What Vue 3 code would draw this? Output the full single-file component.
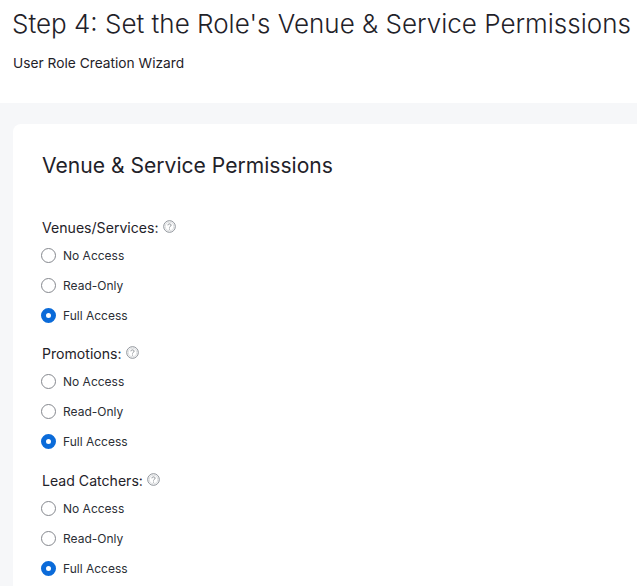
<script setup>
const groups = [
  { label: 'Venues/Services:' },
  { label: 'Promotions:' },
  { label: 'Lead Catchers:' },
];
const options = ['No Access', 'Read-Only', 'Full Access'];
</script>

<template>
  <div class="page">
    <header class="header">
      <h1>Step 4: Set the Role's Venue &amp; Service Permissions</h1>
      <p>User Role Creation Wizard</p>
    </header>
    <main class="content">
      <section class="card">
        <h2>Venue &amp; Service Permissions</h2>
        <div v-for="group in groups" :key="group.label" class="group">
          <div class="group-label">
            <span>{{ group.label }}</span>
            <svg class="help" width="13" height="13" viewBox="0 0 13 13" fill="none">
              <circle cx="6.5" cy="6.5" r="5.8" stroke="#8a8f96" />
              <circle cx="6.5" cy="6.5" r="4.3" stroke="#c4c7cb" stroke-width="0.6" />
              <path d="M4.9 5.3c0-.9.7-1.4 1.6-1.4s1.6.5 1.6 1.3c0 1.2-1.6 1.2-1.6 2.3" stroke="#7d8288" stroke-width="0.9" />
              <circle cx="6.5" cy="9" r="0.6" fill="#7d8288" />
            </svg>
          </div>
          <label v-for="option in options" :key="option" class="radio">
            <input type="radio" :name="group.label" :checked="option === 'Full Access'" />
            <span class="mark"></span>
            <span>{{ option }}</span>
          </label>
        </div>
      </section>
    </main>
  </div>
</template>

<style scoped>
.page {
  width: 637px;
  height: 586px;
  overflow: hidden;
  background: #f6f7f9;
  font-family: Inter, "Liberation Sans", sans-serif;
  color: #1f2229;
}

.header {
  height: 103px;
  box-sizing: border-box;
  padding: 8px 0 0 13px;
  background: #fff;
  white-space: nowrap;
}

h1 {
  margin: 0 0 0 -1px;
  font-size: 26px;
  line-height: 32px;
  font-weight: 300;
}

.header p {
  margin: 15px 0 0;
  font-size: 13.75px;
  line-height: 17px;
}

.content {
  padding: 21px 0 0 13px;
}

.card {
  width: 700px;
  height: 520px;
  box-sizing: border-box;
  padding: 28px 29px;
  background: #fff;
  border-radius: 8px;
}

h2 {
  margin: 0 0 39px;
  font-size: 21.1px;
  line-height: 27px;
  font-weight: 400;
}

.group {
  margin-bottom: 14.5px;
}

.group-label {
  display: flex;
  align-items: center;
  gap: 4px;
  height: 18px;
  margin-bottom: 4px;
  font-size: 14.1px;
}

.help {
  margin-top: -2px;
}

.radio {
  display: flex;
  align-items: center;
  gap: 7px;
  height: 30px;
  margin-left: -1px;
  font-size: 12px;
  color: #2b2e35;
}

.radio input {
  display: none;
}

.mark {
  width: 15px;
  height: 15px;
  box-sizing: border-box;
  border: 1px solid #85888e;
  border-radius: 50%;
  background: #fff;
}

.radio input:checked + .mark {
  border: 5px solid #0b6bd9;
}
</style>
